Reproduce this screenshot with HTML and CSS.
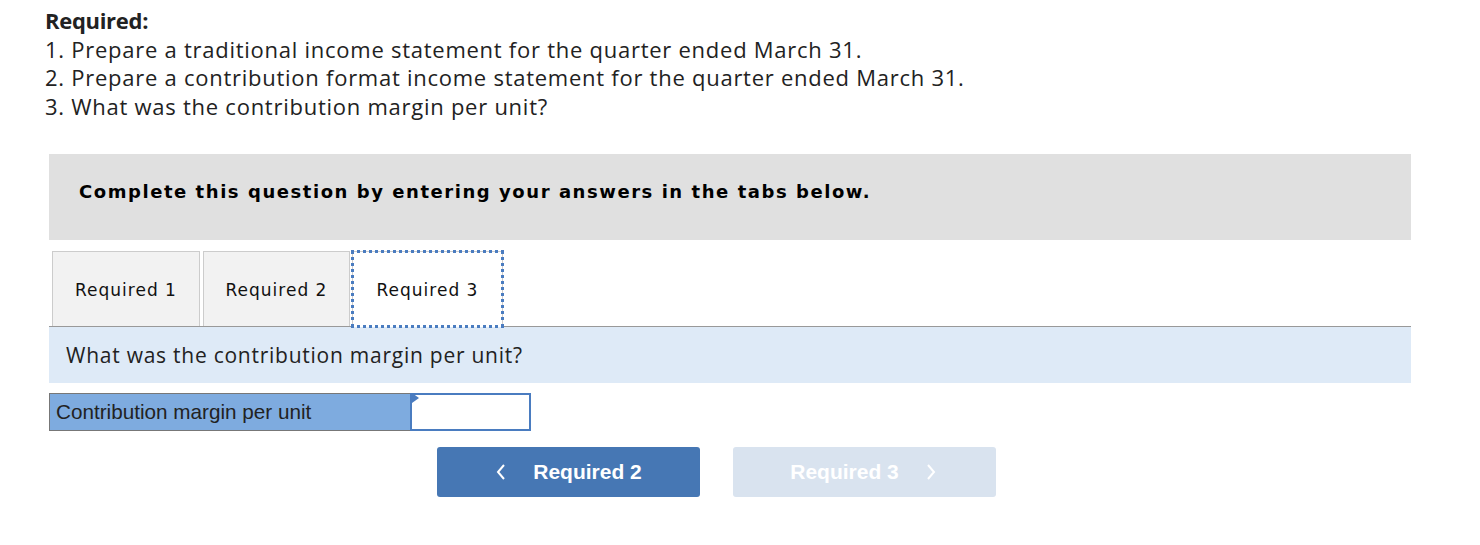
FILE: index.html
```html
<!DOCTYPE html>
<html>
<head>
<meta charset="utf-8">
<link rel="stylesheet" href="styles.css">
</head>
<body>
<div class="page">
  <div class="req">
    <div class="req-title">Required:</div>
    <div>1. Prepare a traditional income statement for the quarter ended March 31.</div>
    <div>2. Prepare a contribution format income statement for the quarter ended March 31.</div>
    <div>3. What was the contribution margin per unit?</div>
  </div>
  <div class="banner">Complete this question by entering your answers in the tabs below.</div>
  <div class="tabs">
    <div class="tab">Required 1</div>
    <div class="tab">Required 2</div>
    <div class="tab active">Required 3</div>
  </div>
  <div class="question">What was the contribution margin per unit?</div>
  <div class="row">
    <div class="label">Contribution margin per unit</div>
    <div class="input"><span class="flag"></span></div>
  </div>
  <div class="nav">
    <div class="btn prev"><svg class="chev" width="10" height="18" viewBox="0 0 10 18"><polyline points="8,2 2,9 8,16" fill="none" stroke="#fff" stroke-width="2"/></svg>Required 2</div>
    <div class="btn next disabled">Required 3<svg class="chev" width="10" height="18" viewBox="0 0 10 18"><polyline points="2,2 8,9 2,16" fill="none" stroke="#fff" stroke-width="2"/></svg></div>
  </div>
</div>
</body>
</html>
```
FILE: styles.css
```css
html, body { margin: 0; padding: 0; background: #fff; }
.page { padding: 6px 69px 0 49px; }
.req { font-family: "Open Sans", sans-serif; font-size: 22px; line-height: 28.5px; letter-spacing: 0.74px; color: #222; margin-left: -4px; }
.req-title { font-weight: 700; letter-spacing: -0.3px; }
.banner {
  margin-top: 34px; background: #e0e0e0; height: 86px; box-sizing: border-box;
  padding: 0 30px 12px; display: flex; align-items: center;
  font-family: "DejaVu Sans", Verdana, sans-serif; font-weight: 700; font-size: 18px; letter-spacing: 1.55px; color: #000;
}
.tabs { display: flex; margin-top: 11px; padding-left: 3px; gap: 3px; border-bottom: 1px solid #999; height: 75px; }
.tab {
  width: 148px; box-sizing: border-box; height: 75px; background: #f2f2f2; border: 1px solid #ccc; border-bottom: none;
  display: flex; align-items: center; justify-content: center; padding-top: 2px;
  font-family: "DejaVu Sans", Verdana, sans-serif; font-size: 17px; letter-spacing: 1px; color: #111;
}
.tab:nth-child(2) { width: 147px; }
.tab.active { background: #fff; width: 151px; margin-left: -1px; outline: 3px dotted #4a7cc0; outline-offset: -2px; height: 76px; margin-bottom: -1px; padding-top: 0; }
.question {
  background: #deeaf7; height: 56px; display: flex; align-items: center; padding-left: 17px;
  font-family: "Open Sans", sans-serif; font-size: 21px; letter-spacing: 0.75px; color: #222;
}
.row { display: flex; margin-top: 10px; height: 38px; }
.label {
  width: 361px; box-sizing: border-box; background: #7eabdf; border: 1px solid #777; border-right: none;
  display: flex; align-items: center; padding-left: 6px;
  font-family: "Liberation Sans", Arial, sans-serif; font-size: 20.7px; color: #222;
}
.input { position: relative; width: 121px; box-sizing: border-box; background: #fff; border: 2px solid #4a7cc0; }
.flag { position: absolute; left: 0; top: -2px; width: 0; height: 0; border-top: 5px solid transparent; border-bottom: 5px solid transparent; border-left: 7px solid #4a7cc0; }
.nav { display: flex; gap: 33px; margin-top: 16px; padding-left: 388px; }
.btn {
  width: 263px; height: 50px; border-radius: 3px; display: flex; align-items: center; justify-content: center;
  font-family: "Liberation Sans", Arial, sans-serif; font-weight: 700; font-size: 21px; color: #fff;
}
.prev { background: #4677b4; }
.disabled { background: #d9e3ef; }
.prev .chev { margin-right: 27px; margin-left: 1px; }
.next .chev { margin-left: 27px; margin-right: 3px; }
```
